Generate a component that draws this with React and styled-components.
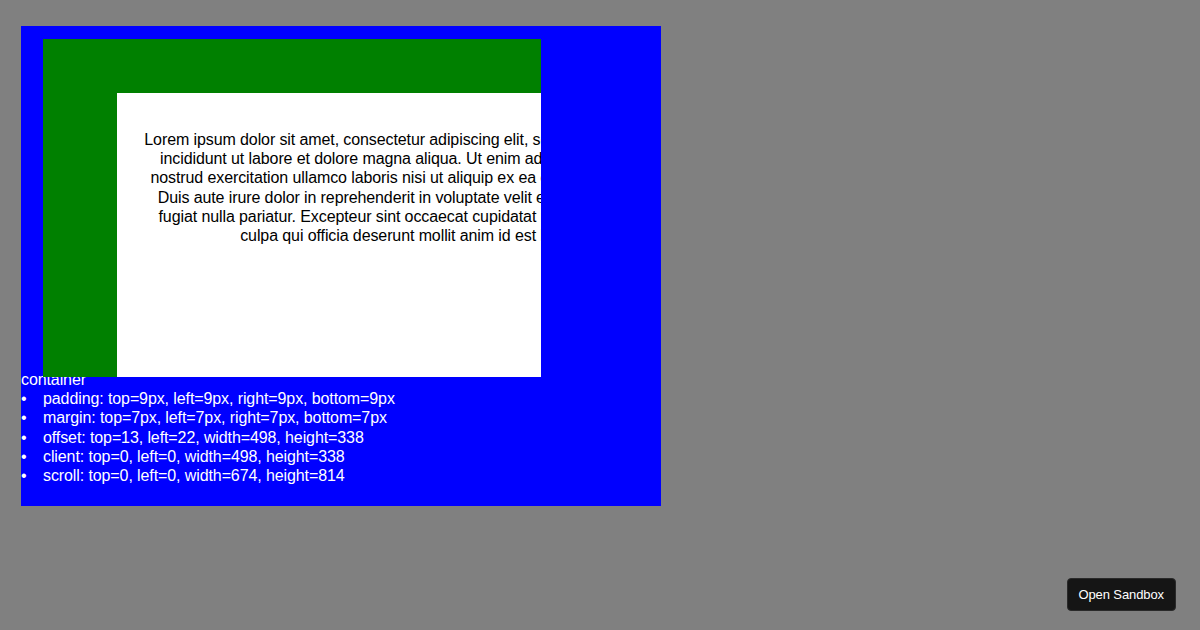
import React from "react";
import styled, { createGlobalStyle } from "styled-components";

const GlobalStyle = createGlobalStyle`
  html, body {
    margin: 0;
    padding: 0;
    background: #808080;
  }
  body {
    font-family: "Liberation Sans", Arial, sans-serif;
    font-size: 16px;
    line-height: 1.2;
    letter-spacing: -0.1px;
  }
`;

const lorem =
  "Lorem ipsum dolor sit amet, consectetur adipiscing elit, sed do eiusmod tempor incididunt ut labore et dolore magna aliqua. Ut enim ad minim veniam, quis nostrud exercitation ullamco laboris nisi ut aliquip ex ea commodo consequat. Duis aute irure dolor in reprehenderit in voluptate velit esse cillum dolore eu fugiat nulla pariatur. Excepteur sint occaecat cupidatat non proident, sunt in culpa qui officia deserunt mollit anim id est laborum.";

const metrics = [
  "padding: top=9px, left=9px, right=9px, bottom=9px",
  "margin: top=7px, left=7px, right=7px, bottom=7px",
  "offset: top=13, left=22, width=498, height=338",
  "client: top=0, left=0, width=498, height=338",
  "scroll: top=0, left=0, width=674, height=814",
];

export default function App() {
  return (
    <>
      <GlobalStyle />
      <Wrapper>
        <Container>
          <Content>
            <p>{lorem}</p>
          </Content>
        </Container>
        <Label>container</Label>
        <MetricList>
          {metrics.map((m) => (
            <li key={m}>{m}</li>
          ))}
        </MetricList>
      </Wrapper>
      <SandboxButton>Open Sandbox</SandboxButton>
    </>
  );
}

const Wrapper = styled.div`
  width: 640px;
  height: 480px;
  margin: 26px 0 0 21px;
  background: #0000ff;
  color: #ffffff;
  overflow: hidden;
  display: flow-root;
`;

const Container = styled.div`
  position: relative;
  width: 498px;
  height: 338px;
  margin: 13px 0 0 22px;
  background: #008000;
  overflow: hidden;
  display: flow-root;
`;

const Content = styled.div`
  width: 600px;
  height: 706px;
  margin: 54px 0 0 74px;
  padding: 18px 18px 18px 26px;
  box-sizing: border-box;
  background: #ffffff;
  color: #000000;
  text-align: center;

  p {
    margin: 19px 0 16px;
  }
`;

const Label = styled.div`
  margin-top: -7px;
`;

const MetricList = styled.ul`
  margin: 0;
  padding: 0;
  list-style: none;

  li {
    display: flex;
  }

  li::before {
    content: "•";
    flex: 0 0 22px;
    padding-left: 0;
  }
`;

const SandboxButton = styled.button`
  position: fixed;
  right: 24px;
  bottom: 19px;
  height: 33px;
  padding: 0 11px 0 10px;
  border: 1px solid #2a2a2a;
  border-radius: 4px;
  background: #151515;
  color: #ffffff;
  font-family: "Liberation Sans", Arial, sans-serif;
  font-size: 13px;
  letter-spacing: -0.1px;
  cursor: pointer;
`;
